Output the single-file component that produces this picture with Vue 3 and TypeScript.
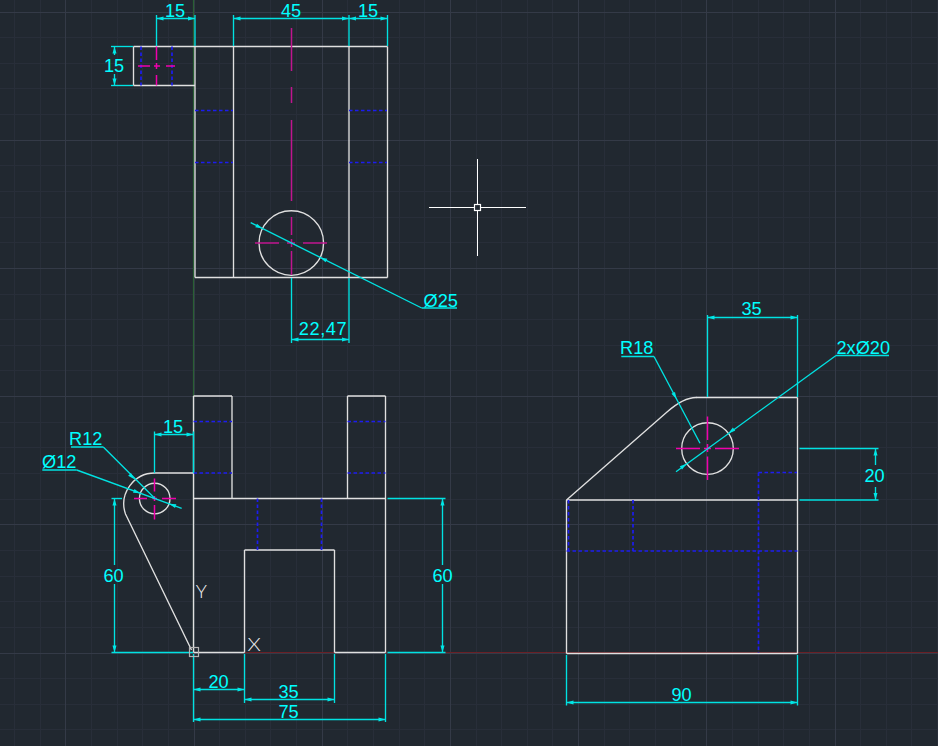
<script setup lang="ts">
type Seg = [number, number, number, number]
type Label = { t: string; x: number; y: number; a?: 'start' | 'middle'; wide?: boolean }

const W = 938
const H = 746
const OX = 193.5
const OY = 652.5
const STEP = 25.64

function gridLines() {
  const minor: Seg[] = []
  const major: Seg[] = []
  for (let k = -8; k < 30; k++) {
    const x = Math.round(OX + k * STEP) + 0.5
    if (x >= 0 && x <= W) (k % 5 === 0 ? major : minor).push([x, 0, x, H])
  }
  for (let k = -4; k < 30; k++) {
    const y = Math.round(OY - k * STEP) + 0.5
    if (y >= 0 && y <= H) (k % 5 === 0 ? major : minor).push([0, y, W, y])
  }
  return { minor, major }
}
const grid = gridLines()

const outline: Seg[] = [
  // top view
  [133.5, 46.5, 387.5, 46.5], [133.5, 46.5, 133.5, 85.5], [133.5, 85.5, 195, 85.5],
  [195, 46.5, 195, 277.5], [387.5, 46.5, 387.5, 277.5], [195, 277.5, 387.5, 277.5],
  [233.5, 46.5, 233.5, 277.5], [349, 46.5, 349, 277.5],
  // front view
  [155, 473, 193.5, 473], [193.5, 396, 193.5, 652.5], [193.5, 396, 232, 396], [232, 396, 232, 498.5],
  [193.5, 498.5, 385.5, 498.5], [347.5, 396, 385.5, 396], [347.5, 396, 347.5, 498.5],
  [385.5, 396, 385.5, 652.5], [244.5, 550, 334.5, 550], [244.5, 550, 244.5, 652.5], [334.5, 550, 334.5, 652.5],
  [193.5, 652.5, 244.5, 652.5], [334.5, 652.5, 385.5, 652.5],
  // side view
  [696.5, 397.5, 797.5, 397.5], [797.5, 397.5, 797.5, 653.5], [566.5, 500, 797.5, 500],
  [566.5, 500, 566.5, 653.5], [566.5, 653.5, 797.5, 653.5],
]
const curves = [
  'M155 473 A31 31 0 0 0 125.5 514 L191.5 650',
  'M566.5 500 L667 412 Q684 397 697 397.5',
]
const circles = [
  [291.3, 243, 32.3],
  [154.7, 498.5, 15.3],
  [707.5, 448.5, 25.8],
]

const hidden: Seg[] = [
  [141, 46.5, 141, 85.5], [172, 46.5, 172, 85.5],
  [195, 110.5, 233, 110.5], [349, 110.5, 387, 110.5], [195, 162.5, 233, 162.5], [349, 162.5, 387, 162.5],
  [193.5, 421.5, 232, 421.5], [347.5, 421.5, 385.5, 421.5], [193.5, 473, 232, 473], [347.5, 473, 385.5, 473],
  [257.5, 498.5, 257.5, 550], [321.5, 498.5, 321.5, 550],
  [566.5, 551, 797.5, 551], [568.5, 500, 568.5, 551], [633, 500, 633, 551],
  [758.5, 472.5, 758.5, 653], [758.5, 472.5, 797, 472.5],
]

const centerDim: Seg[] = [
  [291.5, 28, 291.5, 71], [291.5, 87, 291.5, 103], [291.5, 120, 291.5, 201],
  [291.5, 217, 291.5, 235], [291.5, 239, 291.5, 247], [291.5, 251, 291.5, 275],
  [255, 243, 279, 243], [287, 243, 295, 243], [303, 243, 327, 243],
]
const centerBright: Seg[] = [
  [138, 66, 150, 66], [154, 66, 160, 66], [166, 66, 175, 66],
  [156.5, 46.5, 156.5, 60], [156.5, 63, 156.5, 69], [156.5, 75, 156.5, 85.5],
  [134, 498.5, 147, 498.5], [152.5, 498.5, 157, 498.5], [162, 498.5, 176, 498.5],
  [154.5, 478.5, 154.5, 491.5], [154.5, 496, 154.5, 501], [154.5, 505, 154.5, 519.5],
  [676, 448.5, 700, 448.5], [704, 448.5, 711, 448.5], [715, 448.5, 739, 448.5],
  [707.5, 416.5, 707.5, 440], [707.5, 444, 707.5, 452], [707.5, 456.5, 707.5, 480],
]

const dims: Seg[] = [
  // top view
  [156.5, 15, 156.5, 46], [195, 15, 195, 46], [233.5, 15, 233.5, 46], [349, 15, 349, 46], [387.5, 15, 387.5, 46],
  [156.5, 18.5, 195, 18.5], [233.5, 18.5, 349, 18.5], [349, 18.5, 387.5, 18.5],
  [111, 46.5, 133, 46.5], [111, 85.5, 133, 85.5], [114.5, 46.5, 114.5, 55], [114.5, 74, 114.5, 85.5],
  [250.7, 222.7, 421.7, 308], [421.7, 308, 457, 308],
  [291.5, 278, 291.5, 343], [349, 278, 349, 343], [291.5, 339.5, 349, 339.5],
  // front view
  [154.5, 431.5, 154.5, 473], [193.5, 431.5, 193.5, 473], [154.5, 434.5, 193.5, 434.5],
  [71, 447, 103.3, 447], [103.3, 447, 154.7, 498.3],
  [42.3, 470, 76.7, 470], [76.7, 470, 181.7, 508.3],
  [111.5, 498.5, 122, 498.5], [114.5, 498.5, 114.5, 565], [114.5, 584, 114.5, 652.5], [111.5, 652.5, 193, 652.5],
  [387.5, 498.5, 445.5, 498.5], [442.5, 498.5, 442.5, 565], [442.5, 584, 442.5, 652.5], [387.5, 652.5, 445.5, 652.5],
  [193.5, 654, 193.5, 722], [244.5, 654, 244.5, 703], [334.5, 654, 334.5, 703], [385.5, 654, 385.5, 722],
  [193.5, 689.5, 244.5, 689.5], [244.5, 699.5, 334.5, 699.5], [193.5, 719.5, 385.5, 719.5],
  // side view
  [707.5, 315, 707.5, 397], [797.5, 315, 797.5, 397], [707.5, 317.5, 797.5, 317.5],
  [621.3, 356.5, 654, 356.5], [654, 356.5, 700, 443.3],
  [836, 355.5, 889, 355.5], [836, 355.5, 676, 471.7],
  [799.5, 448.5, 878.5, 448.5], [799.5, 500, 878.5, 500], [875.5, 448.5, 875.5, 465], [875.5, 487, 875.5, 500],
  [566.5, 655, 566.5, 705.5], [797.5, 655, 797.5, 705.5], [566.5, 702.5, 797.5, 702.5],
]

const L = 7
const HW = 2
function arrow(x: number, y: number, deg: number): string {
  const r = (deg * Math.PI) / 180
  const c = Math.cos(r)
  const s = Math.sin(r)
  const bx = x - c * L
  const by = y - s * L
  return `${x},${y} ${bx - s * HW},${by + c * HW} ${bx + s * HW},${by - c * HW}`
}
function angleOf(x1: number, y1: number, x2: number, y2: number) {
  return (Math.atan2(y2 - y1, x2 - x1) * 180) / Math.PI
}
const a25 = angleOf(250.7, 222.7, 421.7, 308)
const aR12 = angleOf(103.3, 447, 154.7, 498.3)
const a12 = angleOf(76.7, 470, 181.7, 508.3)
const aR18 = angleOf(654, 356.5, 700, 443.3)
const a20 = angleOf(836, 355.5, 676, 471.7)

const arrows: string[] = [
  arrow(156.5, 18.5, 180), arrow(195, 18.5, 0), arrow(233.5, 18.5, 180), arrow(349, 18.5, 0),
  arrow(349, 18.5, 180), arrow(387.5, 18.5, 0),
  arrow(114.5, 46.5, -90), arrow(114.5, 85.5, 90),
  arrow(262.4, 228.6, a25), arrow(320.2, 257.4, a25 + 180),
  arrow(291.5, 339.5, 180), arrow(349, 339.5, 0),
  arrow(154.5, 434.5, 180), arrow(193.5, 434.5, 0),
  arrow(134.5, 479.3, aR12),
  arrow(140.3, 493.3, a12), arrow(169.1, 503.7, a12 + 180),
  arrow(114.5, 498.5, -90), arrow(114.5, 652.5, 90),
  arrow(442.5, 498.5, -90), arrow(442.5, 652.5, 90),
  arrow(193.5, 689.5, 180), arrow(244.5, 689.5, 0),
  arrow(244.5, 699.5, 180), arrow(334.5, 699.5, 0),
  arrow(193.5, 719.5, 180), arrow(385.5, 719.5, 0),
  arrow(707.5, 317.5, 180), arrow(797.5, 317.5, 0),
  arrow(676.5, 399, aR18),
  arrow(728.4, 433.3, a20), arrow(686.6, 463.7, a20 + 180),
  arrow(875.5, 448.5, -90), arrow(875.5, 500, 90),
  arrow(566.5, 702.5, 180), arrow(797.5, 702.5, 0),
]

const labels: Label[] = [
  { t: '15', x: 175, y: 17 }, { t: '45', x: 291, y: 17 }, { t: '15', x: 368, y: 17 },
  { t: '15', x: 114, y: 72 },
  { t: 'Ø25', x: 423.5, y: 306.5, a: 'start' },
  { t: '22,47', x: 323, y: 335, wide: true },
  { t: '15', x: 173, y: 432.5 },
  { t: 'R12', x: 69, y: 445, a: 'start' },
  { t: 'Ø12', x: 42, y: 468, a: 'start' },
  { t: '60', x: 113.5, y: 582 }, { t: '60', x: 442.5, y: 582 },
  { t: '20', x: 218.5, y: 688 }, { t: '35', x: 288.5, y: 698 }, { t: '75', x: 288.5, y: 718 },
  { t: '35', x: 751.5, y: 315 },
  { t: 'R18', x: 620, y: 354, a: 'start' },
  { t: '2xØ20', x: 836.5, y: 353.5, a: 'start' },
  { t: '20', x: 874.5, y: 481.5 },
  { t: '90', x: 681.5, y: 700.5 },
]
</script>

<template>
  <div class="canvas">
    <svg class="sheet" :width="W" :height="H" :viewBox="`0 0 ${W} ${H}`">
      <g class="minor">
        <line v-for="(s, i) in grid.minor" :key="i" :x1="s[0]" :y1="s[1]" :x2="s[2]" :y2="s[3]" />
      </g>
      <g class="major">
        <line v-for="(s, i) in grid.major" :key="i" :x1="s[0]" :y1="s[1]" :x2="s[2]" :y2="s[3]" />
      </g>
      <line class="axis-y" x1="193.5" y1="0" x2="193.5" y2="652" />
      <line class="axis-x" x1="193.5" y1="652.5" x2="938" y2="652.5" />

      <g class="outline">
        <line v-for="(s, i) in outline" :key="i" :x1="s[0]" :y1="s[1]" :x2="s[2]" :y2="s[3]" />
        <path v-for="(d, i) in curves" :key="i" :d="d" />
        <circle v-for="(c, i) in circles" :key="i" :cx="c[0]" :cy="c[1]" :r="c[2]" />
      </g>
      <g class="hidden">
        <line v-for="(s, i) in hidden" :key="i" :x1="s[0]" :y1="s[1]" :x2="s[2]" :y2="s[3]" />
      </g>
      <g class="center-dim">
        <line v-for="(s, i) in centerDim" :key="i" :x1="s[0]" :y1="s[1]" :x2="s[2]" :y2="s[3]" />
      </g>
      <g class="center-bright">
        <line v-for="(s, i) in centerBright" :key="i" :x1="s[0]" :y1="s[1]" :x2="s[2]" :y2="s[3]" />
      </g>
      <g class="dims">
        <line v-for="(s, i) in dims" :key="i" :x1="s[0]" :y1="s[1]" :x2="s[2]" :y2="s[3]" />
      </g>
      <g class="arrows">
        <polygon v-for="(p, i) in arrows" :key="i" :points="p" />
      </g>
      <g class="labels">
        <text
          v-for="(l, i) in labels"
          :key="i"
          :class="{ wide: l.wide }"
          :x="l.x"
          :y="l.y"
          :text-anchor="l.a ?? 'middle'"
        >{{ l.t }}</text>
      </g>

      <!-- UCS icon -->
      <rect class="ucs-box" x="189.5" y="647.5" width="9" height="9" />
      <text class="ucs-letter" x="0" y="0" text-anchor="middle" transform="translate(201.3 598) scale(1.1 1)">Y</text>
      <text class="ucs-letter" x="0" y="0" text-anchor="middle" transform="translate(254 651.3) scale(1.25 1)">X</text>

      <!-- crosshair cursor -->
      <g class="cursor">
        <line x1="429" y1="207.5" x2="474.5" y2="207.5" />
        <line x1="480.5" y1="207.5" x2="526" y2="207.5" />
        <line x1="477.5" y1="159" x2="477.5" y2="204.5" />
        <line x1="477.5" y1="210.5" x2="477.5" y2="256" />
        <rect x="474.5" y="204.5" width="6" height="6" />
      </g>
    </svg>
  </div>
</template>

<style scoped>
.canvas {
  width: 938px;
  height: 746px;
  background: #212830;
  overflow: hidden;
}
.sheet {
  display: block;
}
.minor line {
  stroke: #282e39;
  stroke-width: 1;
}
.major line {
  stroke: #343a47;
  stroke-width: 1;
}
.axis-y {
  stroke: #2a6034;
  stroke-width: 1.2;
}
.axis-x {
  stroke: #6a2026;
  stroke-width: 1;
}
.hidden line {
  stroke: #1c1cf0;
  stroke-width: 1.7;
  stroke-dasharray: 3.5 2.5;
}
.center-dim line {
  stroke: #c0148f;
  stroke-width: 1.5;
}
.center-bright line {
  stroke: #f000ac;
  stroke-width: 1.5;
}
.outline line,
.outline path,
.outline circle {
  stroke: #e0e0e0;
  stroke-width: 1.35;
  fill: none;
}
.dims line {
  stroke: #00e2e2;
  stroke-width: 1.35;
}
.arrows polygon {
  fill: #00e6e6;
}
.labels text {
  font-family: "Liberation Sans", Arial, sans-serif;
  font-size: 18.2px;
  fill: #00ffff;
}
.labels text.wide {
  letter-spacing: 0.6px;
}
.ucs-box {
  fill: none;
  stroke: #b4b4b4;
  stroke-width: 1.2;
}
.ucs-letter {
  font-family: "Lato", "Liberation Sans", sans-serif;
  font-weight: 300;
  font-size: 17px;
  fill: #f0f0f0;
}
.cursor line {
  stroke: #ffffff;
  stroke-width: 1;
}
.cursor rect {
  fill: none;
  stroke: #ffffff;
  stroke-width: 1.2;
}
</style>
